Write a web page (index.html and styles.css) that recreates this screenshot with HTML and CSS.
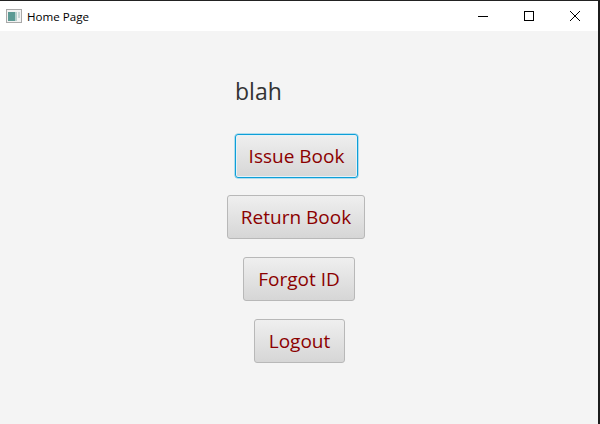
FILE: index.html
```html
<!DOCTYPE html>
<html lang="en">
<head>
    <meta charset="UTF-8">
    <meta name="viewport" content="width=device-width, initial-scale=1.0">
    <title>Home Page</title>
    <link rel="stylesheet" href="styles.css">
</head>
<body>

<div class="window">
    <div class="title-bar">
        <svg class="app-icon" width="16" height="14" viewBox="0 0 16 14">
            <rect x="0.5" y="0.5" width="15" height="13" fill="#f2f2f2" stroke="#a9a9a9"/>
            <rect x="2" y="3" width="7" height="9" fill="#5c9a94"/>
            <rect x="9" y="3" width="2" height="9" fill="#b5cfcc"/>
            <rect x="12" y="3" width="2" height="6" fill="#c9d6d6"/>
        </svg>
        <span class="window-title">Home Page</span>
        <div class="window-controls">
            <span class="control">
                <svg width="12" height="12" viewBox="0 0 12 12"><path d="M1 6.5H11" stroke="#000" fill="none"/></svg>
            </span>
            <span class="control">
                <svg width="12" height="12" viewBox="0 0 12 12"><rect x="1.5" y="1.5" width="9" height="9" stroke="#000" fill="none"/></svg>
            </span>
            <span class="control">
                <svg width="12" height="12" viewBox="0 0 12 12"><path d="M1 1L11 11M11 1L1 11" stroke="#000" fill="none"/></svg>
            </span>
        </div>
    </div>

    <div class="content">
        <div class="user-name">blah</div>
        <button class="issue-btn focused">Issue Book</button>
        <button class="return-btn">Return Book</button>
        <button class="forgot-btn">Forgot ID</button>
        <button class="logout-btn">Logout</button>
    </div>
</div>

</body>
</html>
```

FILE: styles.css
```css
html, body {
    margin: 0;
    padding: 0;
    height: 100%;
}
body {
    font-family: "Open Sans", "Noto Sans", sans-serif;
    background-color: #f4f4f4;
    overflow: hidden;
}
.window {
    height: 424px;
    box-sizing: border-box;
    border-top: 1px solid #222;
    border-right: 2px solid #1c1c1c;
    display: flex;
    flex-direction: column;
}
.title-bar {
    height: 30px;
    flex-shrink: 0;
    background-color: #fff;
    display: flex;
    align-items: center;
    padding-left: 6px;
}
.app-icon {
    margin-right: 5px;
}
.window-title {
    font-size: 11.6px;
    color: #000;
}
.window-controls {
    margin-left: auto;
    display: flex;
}
.control {
    width: 46px;
    height: 30px;
    display: flex;
    align-items: center;
    justify-content: center;
}
.content {
    flex: 1;
    display: flex;
    flex-direction: column;
    align-items: flex-start;
}
.user-name {
    font-size: 23px;
    line-height: 32px;
    color: #333;
    margin: 44px 0 0 235px;
}
button {
    height: 44px;
    box-sizing: border-box;
    padding: 0;
    font-family: inherit;
    font-size: 19px;
    color: #8b0000;
    background: linear-gradient(#efefef, #d6d6d6);
    border: 1px solid #b8b8b8;
    border-radius: 3px;
    margin-top: 18px;
}
button.focused {
    border: 1px solid #0d9fd8;
    box-shadow: inset 0 0 0 1px #e4f2f8, 0 0 0 0.5px #6cc4e6;
}
.issue-btn {
    width: 123px;
    margin-left: 235px;
    margin-top: 27px;
}
.return-btn {
    width: 138px;
    margin-left: 227px;
    margin-top: 17px;
}
.forgot-btn {
    width: 112px;
    margin-left: 243px;
}
.logout-btn {
    width: 91px;
    margin-left: 254px;
}
```
